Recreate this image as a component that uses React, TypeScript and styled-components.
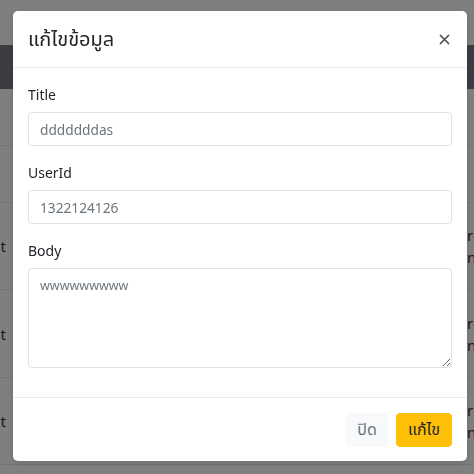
import React from 'react';
import styled, { createGlobalStyle } from 'styled-components';

const GlobalStyle = createGlobalStyle`
  html, body {
    margin: 0;
    padding: 0;
    background: #ffffff;
    font-family: 'Noto Sans', 'Noto Sans Thai', 'Open Sans', sans-serif;
    color: #212529;
  }
  * { box-sizing: border-box; }
`;

// page that sits behind the dialog
const Page = styled.div`
  width: 474px;
  height: 474px;
  overflow: hidden;
  padding-top: 45px;
`;

const Navbar = styled.div`
  height: 44px;
  background: #777b81;
`;

const TableRow = styled.div<{ $h: number }>`
  height: ${(p) => p.$h}px;
  display: flex;
  align-items: center;
  justify-content: space-between;
  border-bottom: 1px solid #e6e6e6;
  font-size: 15px;
  line-height: 22px;
  color: #333333;
`;

const EdgeCell = styled.div`
  width: 6px;
  overflow: hidden;
  display: flex;
  justify-content: flex-end;
  white-space: nowrap;
`;

const RightCell = styled.div`
  width: 7px;
  overflow: hidden;
  white-space: nowrap;
`;

const Backdrop = styled.div`
  position: fixed;
  inset: 0;
  background: rgba(0, 0, 0, 0.5);
  display: flex;
  justify-content: flex-start;
  padding: 11px 0 0 13px;
`;

const Dialog = styled.div`
  width: 454px;
  height: 450px;
  background: #ffffff;
  border-radius: 5px;
  display: flex;
  flex-direction: column;
  box-shadow: 0 2px 6px rgba(0, 0, 0, 0.15);
`;

const Header = styled.div`
  height: 57px;
  display: flex;
  align-items: center;
  justify-content: space-between;
  padding: 0 17px 0 15px;
  border-bottom: 1px solid #e9ecef;
`;

const Title = styled.h5`
  margin: 0;
  font-size: 20px;
  font-weight: 400;
  line-height: 24px;
  color: #212529;
`;

const CloseButton = styled.button`
  border: 0;
  background: transparent;
  padding: 0;
  width: 12px;
  height: 12px;
  display: flex;
  align-items: center;
  justify-content: center;
  cursor: pointer;
`;

const Body = styled.div`
  flex: 1;
  padding: 17px 15px 0;
`;

const Group = styled.div`
  margin-bottom: 17px;
`;

const Label = styled.label`
  display: block;
  font-size: 14px;
  line-height: 20px;
  margin-bottom: 7px;
  color: #212529;
`;

const Input = styled.input`
  display: block;
  width: 100%;
  height: 34px;
  padding: 0 11px;
  font-family: inherit;
  font-size: 13.7px;
  color: #6c757d;
  background: #fff;
  border: 1px solid #dee2e6;
  border-radius: 4px;
  outline: none;
`;

const TextArea = styled.textarea`
  display: block;
  width: 100%;
  height: 100px;
  padding: 6px 11px;
  font-family: inherit;
  font-size: 12.5px;
  line-height: 21px;
  color: #6c757d;
  border: 1px solid #dee2e6;
  border-radius: 4px;
  outline: none;
  resize: vertical;
`;

const Footer = styled.div`
  height: 64px;
  display: flex;
  align-items: center;
  justify-content: flex-end;
  gap: 8px;
  padding: 0 15px;
  border-top: 1px solid #e9ecef;
`;

const Button = styled.button<{ $variant: 'light' | 'warning' }>`
  height: 34px;
  padding: 0 ${(p) => (p.$variant === 'warning' ? 11 : 10)}px;
  border: 1px solid ${(p) => (p.$variant === 'warning' ? '#ffc107' : '#f8f9fa')};
  border-radius: 4px;
  background: ${(p) => (p.$variant === 'warning' ? '#ffc107' : '#f8f9fa')};
  color: ${(p) => (p.$variant === 'warning' ? '#212529' : '#6c757d')};
  font-family: inherit;
  font-size: 16px;
  cursor: pointer;
`;

const rows = [
  { h: 57, left: '', right: [] as string[] },
  { h: 57, left: '', right: [] },
  { h: 87, left: 'Edit', right: ['r-', 'n'] },
  { h: 88, left: 'Edit', right: ['r-', 'n'] },
  { h: 87, left: 'Edit', right: ['r-', 'n'] },
];

const App = () => {
  return (
    <>
      <GlobalStyle />
      <Page>
        <Navbar />
        {rows.map((row, i) => (
          <TableRow key={i} $h={row.h}>
            <EdgeCell>{row.left}</EdgeCell>
            <RightCell>
              {row.right.map((line) => (
                <div key={line}>{line}</div>
              ))}
            </RightCell>
          </TableRow>
        ))}
      </Page>
      <Backdrop>
        <Dialog>
          <Header>
            <Title>แก้ไขข้อมูล</Title>
            <CloseButton aria-label="Close">
              <svg width="11" height="11" viewBox="0 0 16 16">
                <path d="M2 2L14 14M14 2L2 14" stroke="#555" strokeWidth="2.2" strokeLinecap="round" />
              </svg>
            </CloseButton>
          </Header>
          <Body>
            <Group>
              <Label>Title</Label>
              <Input defaultValue="dddddddas" />
            </Group>
            <Group>
              <Label>UserId</Label>
              <Input defaultValue="1322124126" />
            </Group>
            <Group>
              <Label>Body</Label>
              <TextArea defaultValue="wwwwwwwww" />
            </Group>
          </Body>
          <Footer>
            <Button $variant="light">ปิด</Button>
            <Button $variant="warning">แก้ไข</Button>
          </Footer>
        </Dialog>
      </Backdrop>
    </>
  );
};

export default App;
